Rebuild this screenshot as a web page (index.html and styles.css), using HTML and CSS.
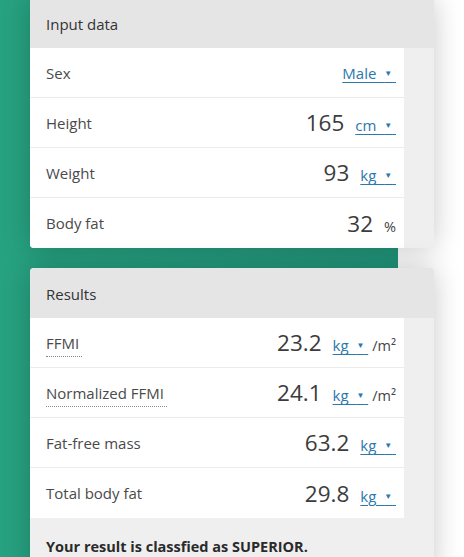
FILE: index.html
```html
<!DOCTYPE html>
<html lang="en">
<head>
<meta charset="utf-8">
<title>FFMI calculator</title>
<link rel="stylesheet" href="styles.css">
</head>
<body>
<div class="page">
  <section class="card card-input">
    <header class="card-head">Input data</header>
    <div class="card-body">
      <ul class="rows">
        <li class="row">
          <span class="label">Sex</span>
          <span class="value"><a class="unit" href="#">Male&nbsp;&nbsp;<span class="caret">&#9660;</span>&nbsp;</a></span>
        </li>
        <li class="row">
          <span class="label">Height</span>
          <span class="value"><span class="num">165</span><a class="unit" href="#">cm&nbsp;&nbsp;<span class="caret">&#9660;</span>&nbsp;</a></span>
        </li>
        <li class="row">
          <span class="label">Weight</span>
          <span class="value"><span class="num">93</span><a class="unit" href="#">kg&nbsp;&nbsp;<span class="caret">&#9660;</span>&nbsp;</a></span>
        </li>
        <li class="row">
          <span class="label">Body fat</span>
          <span class="value"><span class="num">32</span><span class="suffix pct">%</span></span>
        </li>
      </ul>
    </div>
  </section>

  <section class="card card-results">
    <header class="card-head">Results</header>
    <div class="card-body">
      <ul class="rows">
        <li class="row">
          <span class="label"><abbr class="term">FFMI</abbr></span>
          <span class="value"><span class="num">23.2</span><a class="unit" href="#">kg&nbsp;&nbsp;<span class="caret">&#9660;</span>&nbsp;</a><span class="suffix">/m²</span></span>
        </li>
        <li class="row">
          <span class="label"><abbr class="term">Normalized FFMI</abbr></span>
          <span class="value"><span class="num">24.1</span><a class="unit" href="#">kg&nbsp;&nbsp;<span class="caret">&#9660;</span>&nbsp;</a><span class="suffix">/m²</span></span>
        </li>
        <li class="row">
          <span class="label">Fat-free mass</span>
          <span class="value"><span class="num">63.2</span><a class="unit" href="#">kg&nbsp;&nbsp;<span class="caret">&#9660;</span>&nbsp;</a></span>
        </li>
        <li class="row">
          <span class="label">Total body fat</span>
          <span class="value"><span class="num">29.8</span><a class="unit" href="#">kg&nbsp;&nbsp;<span class="caret">&#9660;</span>&nbsp;</a></span>
        </li>
      </ul>
      <p class="verdict">Your result is classfied as SUPERIOR.</p>
    </div>
  </section>
</div>
</body>
</html>
```

FILE: styles.css
```css
* { box-sizing: border-box; }

html, body {
  margin: 0;
  padding: 0;
}

body {
  font-family: "Open Sans", "Noto Sans", "Liberation Sans", sans-serif;
  color: #444;
  background: linear-gradient(to right, #27a280 0, #21947a 398px, #ffffff 398px);
  height: 557px;
  overflow: hidden;
}

.page {
  display: flex;
  flex-direction: column;
  gap: 20px;
  padding-left: 30px;
  width: 434px;
}

.card {
  background: #efefef;
  border-radius: 4px;
  box-shadow: 0 0 28px rgba(0, 0, 0, 0.22);
  overflow: hidden;
}

.card-input {
  margin-top: -2px;
}

.card-head {
  height: 50px;
  display: flex;
  align-items: center;
  padding: 1px 0 0 16px;
  background: #e5e5e5;
  color: #333;
  font-size: 15px;
}

.rows {
  list-style: none;
  margin: 0 30px 0 0;
  padding: 0;
  background: #fff;
}

.row {
  height: 50px;
  display: flex;
  align-items: center;
  justify-content: space-between;
  padding: 0 8px 0 16px;
  border-bottom: 1px solid #ececec;
}

.row:last-child {
  border-bottom: none;
}

.label {
  font-size: 15px;
  color: #4a4a4a;
}

.term {
  text-decoration: none;
  border-bottom: 1px dotted #8a8a8a;
  padding: 0 3px 3px 0;
}

.value {
  display: flex;
  align-items: baseline;
}

.num {
  font-size: 22.5px;
  color: #3c3c3c;
  margin-right: 11px;
}

.unit {
  font-size: 15px;
  color: #2b78ad;
  text-decoration: underline;
  text-underline-offset: 3px;
  text-decoration-thickness: 1px;
}

.caret {
  font-size: 8px;
  vertical-align: 3px;
}

.suffix {
  font-size: 14.5px;
  color: #444;
  margin-left: 4px;
}

.pct {
  margin-left: 0;
}

.verdict {
  margin: 0;
  padding: 19px 16px 20px;
  font-size: 14.5px;
  font-weight: 700;
  color: #2a2a2a;
}
```
